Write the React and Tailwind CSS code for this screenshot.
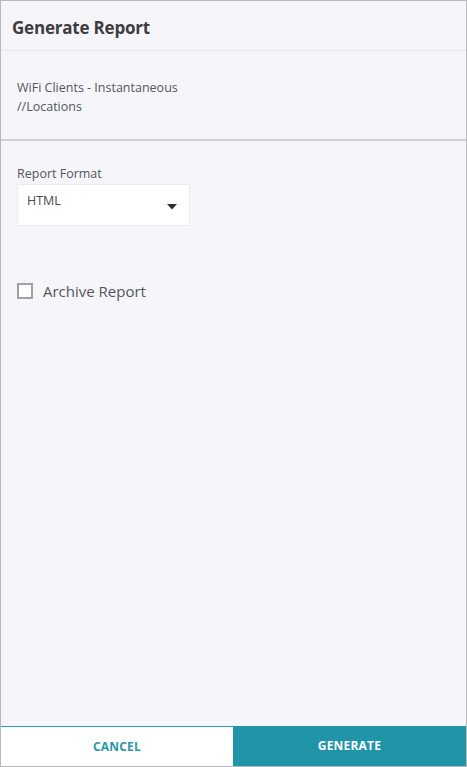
import React, { useState } from 'react';

export default function App() {
  const [archive, setArchive] = useState(false);

  return (
    <div
      className="w-[467px] h-[767px] flex flex-col bg-[#f6f6fa] border border-[#b9b9bd] text-[#555559]"
      style={{ fontFamily: '"Open Sans", "Noto Sans", sans-serif' }}
    >
      {/* Header */}
      <div className="h-[50px] shrink-0 flex items-center px-[11px] pt-[5px] border-b border-[#e6e6ec]">
        <h1 className="text-[17px] font-bold text-[#3d3d40] tracking-[-0.2px]">Generate Report</h1>
      </div>

      {/* Report info */}
      <div className="h-[90px] shrink-0 px-[16px] pt-[27px] border-b-2 border-[#cfcfd4] text-[12.5px] leading-[19px]">
        <div>WiFi Clients - Instantaneous</div>
        <div>//Locations</div>
      </div>

      {/* Form */}
      <div className="flex-1 px-[16px] pt-[25px]">
        <label className="block text-[12.5px] leading-[16px] mb-[2px]">Report Format</label>
        <div className="w-[173px] h-[42px] bg-white border border-[#ebebef] flex items-start justify-between pl-[9px] pr-[12px] pt-[8px]">
          <span className="text-[12.5px] leading-[16px] text-[#4a4a4e]">HTML</span>
          <svg width="10" height="6" viewBox="0 0 10 6" className="mt-[11px]">
            <path d="M0 0 L10 0 L5 5.5 Z" fill="#2e2e32" />
          </svg>
        </div>

        <button
          type="button"
          onClick={() => setArchive(!archive)}
          className="mt-[56px] flex items-center gap-[10px]"
        >
          <span className="w-[16px] h-[16px] border-2 border-[#a0a0a4] bg-white"></span>
          <span className="text-[15px] leading-[18px] text-[#55555a]">Archive Report</span>
        </button>
      </div>

      {/* Footer buttons */}
      <div className="h-[40px] shrink-0 flex">
        <button
          type="button"
          className="w-[232px] bg-white border-t border-[#2aa0b3] text-[#2a97ab] text-[12px] font-bold tracking-[0.2px]"
        >
          CANCEL
        </button>
        <button
          type="button"
          className="flex-1 bg-[#2195a8] text-white text-[12px] font-bold tracking-[0.2px]"
        >
          GENERATE
        </button>
      </div>
    </div>
  );
}
